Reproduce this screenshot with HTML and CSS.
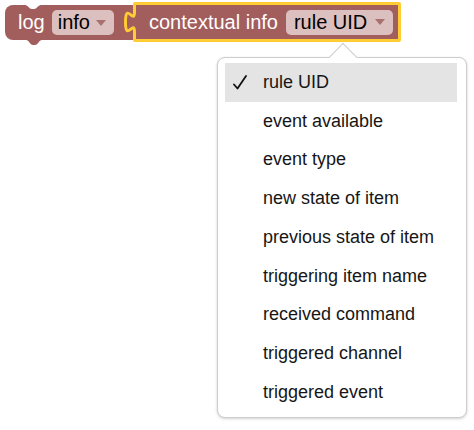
FILE: index.html
```html
<!DOCTYPE html>
<html lang="en">
<head>
	<meta charset="UTF-8">
	<title>Blockly log block</title>
	<link rel="stylesheet" href="styles.css">
</head>
<body>
	<div class="workspace">
		<div class="logBlock">
			<svg class="notchTop" width="16" height="5" viewBox="0 0 16 5"><path d="M0,0 C3,0 4,4 7,4 L9,4 C12,4 13,0 16,0 Z" fill="#fff"/></svg>
			<svg class="notchBottom" width="16" height="6" viewBox="0 0 16 6"><path d="M0,0 C3,0 4,5 7,5 L9,5 C12,5 13,0 16,0 Z" fill="#a25d5d"/></svg>
			<span class="label">log</span>
			<div class="field">
				<span class="value">info</span>
				<svg class="arrow" width="10" height="6" viewBox="0 0 10 6"><path d="M0,0 L10,0 L5,6 Z" fill="#a97070"/></svg>
			</div>
			<div class="ctxBlock">
				<svg class="tab" width="16" height="22" viewBox="0 -1 16 22">
					<path d="M10.5,0 C10.5,13.3 1.5,-10.7 1.5,10 S10.5,6.7 10.5,20 L16,20 L16,0 Z" fill="#a25d5d"/>
					<path d="M10.5,0 C10.5,13.3 1.5,-10.7 1.5,10 S10.5,6.7 10.5,20" fill="none" stroke="#fc3" stroke-width="3"/>
				</svg>
				<span class="label">contextual info</span>
				<div class="field wide">
					<span class="value">rule UID</span>
					<svg class="arrow" width="10" height="6" viewBox="0 0 10 6"><path d="M0,0 L10,0 L5,6 Z" fill="#a97070"/></svg>
				</div>
			</div>
		</div>

		<div class="menu">
			<div class="pointer"></div>
			<div class="item selected">
				<svg class="check" width="16" height="16" viewBox="0 0 16 16"><path d="M1,9.5 L4.5,13.5 L13,1" fill="none" stroke="#111" stroke-width="1.8" stroke-linecap="round" stroke-linejoin="round"/></svg>
				<span>rule UID</span>
			</div>
			<div class="item"><span>event available</span></div>
			<div class="item"><span>event type</span></div>
			<div class="item"><span>new state of item</span></div>
			<div class="item"><span>previous state of item</span></div>
			<div class="item"><span>triggering item name</span></div>
			<div class="item"><span>received command</span></div>
			<div class="item"><span>triggered channel</span></div>
			<div class="item"><span>triggered event</span></div>
		</div>
	</div>
</body>
</html>
```

FILE: styles.css
```css
html, body {
	margin: 0;
	padding: 0;
	background: #fff;
}
.workspace {
	position: relative;
	width: 474px;
	height: 430px;
	overflow: hidden;
	font-family: "Liberation Sans", Arial, sans-serif;
	padding: 5px 0 0 5px;
	box-sizing: border-box;
}
.logBlock {
	position: relative;
	display: inline-flex;
	align-items: center;
	height: 35px;
	padding-left: 13px;
	background: #a25d5d;
	border-radius: 8px 0 0 8px;
}
.notchTop {
	position: absolute;
	left: 20px;
	top: 0;
}
.notchBottom {
	position: absolute;
	left: 21px;
	top: 35px;
}
.label {
	color: #fff;
	font-size: 20px;
	white-space: nowrap;
}
.field {
	display: flex;
	align-items: center;
	height: 25px;
	margin-left: 7px;
	padding: 0 8px 0 6px;
	background: #dcbfbf;
	border-radius: 5px;
}
.field .value {
	color: #000;
	font-size: 20px;
}
.field .arrow {
	margin-left: 6px;
}
.field.wide {
	margin-left: 8px;
	padding-left: 8px;
}
.field.wide .arrow {
	margin-left: 8px;
}
.ctxBlock {
	position: relative;
	display: flex;
	align-items: center;
	box-sizing: border-box;
	height: 40px;
	margin-top: -5px;
	margin-bottom: -4px;
	margin-left: 19px;
	padding: 0 5px 0 13px;
	background: #a25d5d;
	border: 3px solid #fc3;
	border-radius: 2px;
}
.ctxBlock .tab {
	position: absolute;
	left: -12px;
	top: 6px;
	overflow: visible;
}
.menu {
	position: absolute;
	left: 217px;
	top: 57px;
	width: 250px;
	height: 361px;
	box-sizing: border-box;
	padding: 5px 9px 5px 7px;
	background: #fff;
	border: 1px solid #cdcdcd;
	border-radius: 8px;
	box-shadow: 0 1px 3px rgba(0, 0, 0, 0.18);
	display: flex;
	flex-direction: column;
}
.pointer {
	position: absolute;
	left: 115px;
	top: -11px;
	width: 19px;
	height: 19px;
	background: #fff;
	border-top: 1px solid #cdcdcd;
	border-left: 1px solid #cdcdcd;
	transform: rotate(45deg);
}
.item {
	position: relative;
	display: flex;
	align-items: center;
	height: 38.75px;
	padding-left: 38px;
	font-size: 18px;
	color: #161616;
	white-space: nowrap;
}
.item.selected {
	background: #e4e4e4;
}
.check {
	position: absolute;
	left: 8px;
	top: 12px;
}
```
